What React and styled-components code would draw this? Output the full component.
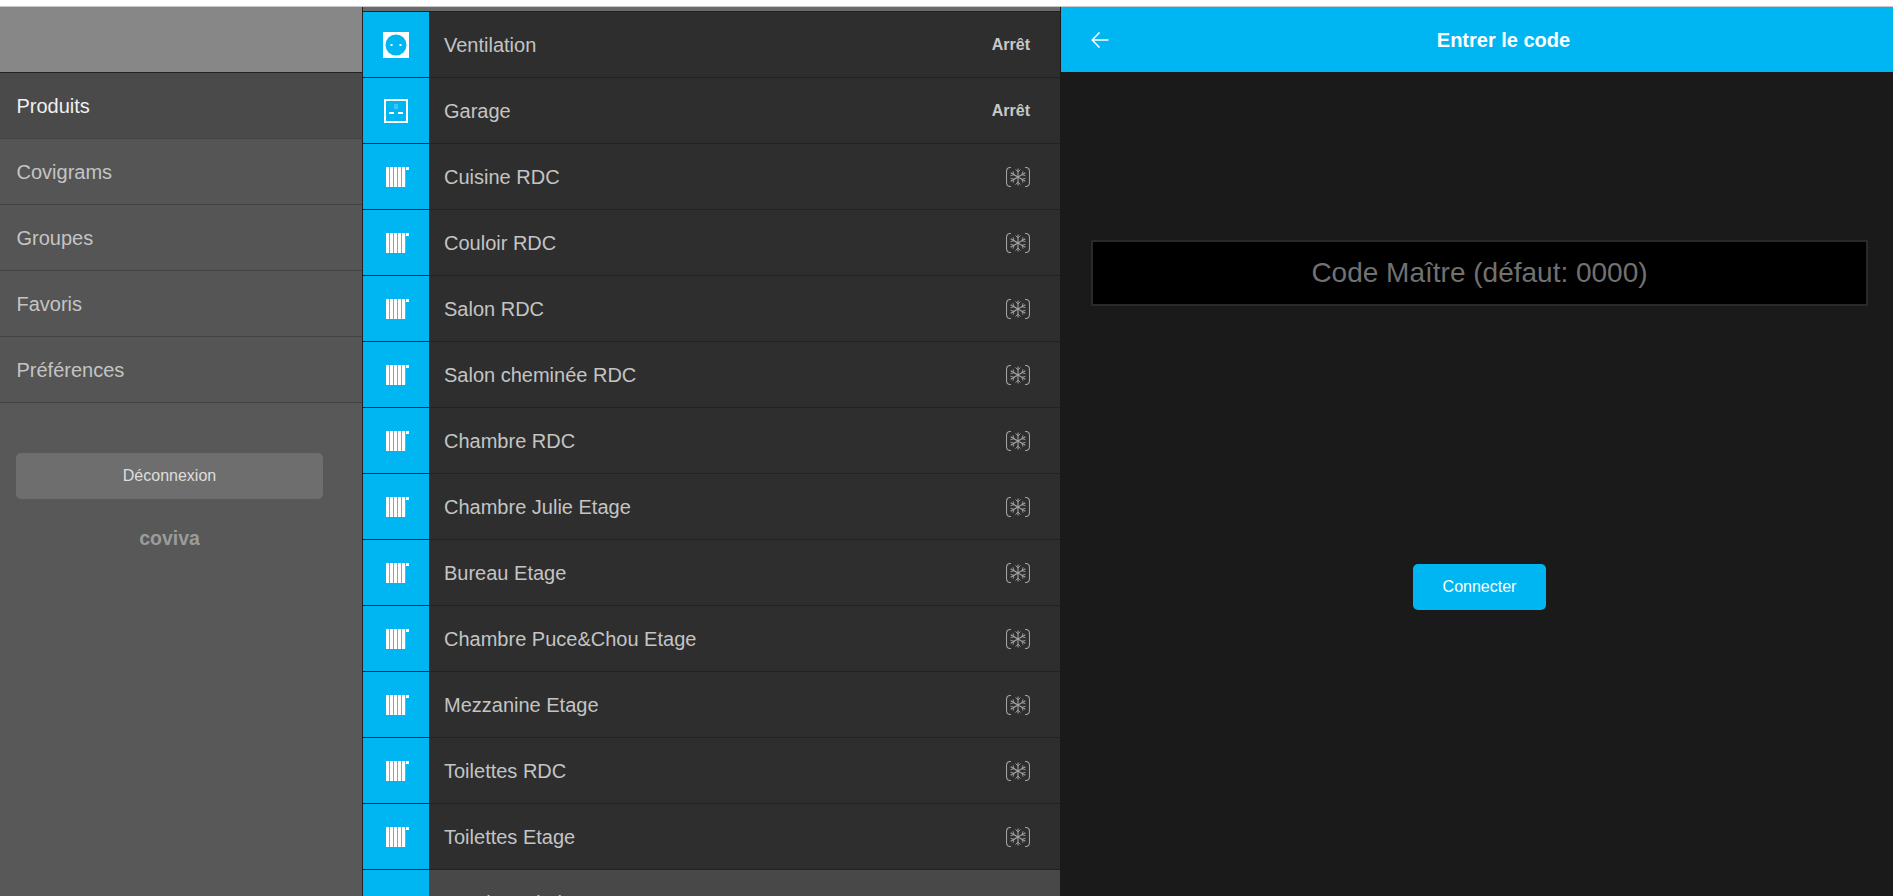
import React from 'react'
import styled, { createGlobalStyle } from 'styled-components'

const GlobalStyle = createGlobalStyle`
    html, body {
        margin: 0;
        padding: 0;
        background: #ffffff;
        height: 100%;
        overflow: hidden;
    }
    * {
        box-sizing: border-box;
    }
`

const Page = styled.div`
    height: 896px;
    padding-top: 6px;
    display: flex;
    flex-direction: column;
    font-family: 'Liberation Sans', Arial, sans-serif;
    overflow: hidden;
`

const Columns = styled.div`
    flex: 1;
    min-height: 0;
    display: flex;
    border-top: 1px solid #c8c8c8;
`

const Sidebar = styled.aside`
    width: 362px;
    flex-shrink: 0;
    background: #585858;
    display: flex;
    flex-direction: column;
`

const SidebarTop = styled.div`
    height: 66px;
    background: #878787;
    border-bottom: 1px solid #222222;
`

const MenuItem = styled.div`
    height: 66px;
    padding: 2px 0 0 16.5px;
    display: flex;
    align-items: center;
    font-size: 20px;
    color: ${(p) => (p.$active ? '#f0f0f0' : '#c4c4c4')};
    background: ${(p) => (p.$active ? '#4a4a4a' : '#555555')};
    border-bottom: 1px solid #424242;
`

const LogoutButton = styled.button`
    margin: 50px 0 0 16px;
    width: 307px;
    height: 46px;
    border: none;
    border-radius: 5px;
    background: #6e6e6e;
    color: #dedede;
    font-family: inherit;
    font-size: 16px;
    padding: 0;
`

const Brand = styled.div`
    margin: 28px 0 0 16px;
    width: 307px;
    text-align: center;
    font-size: 19.5px;
    font-weight: 700;
    color: #9b9b9b;
`

const ProductList = styled.div`
    width: 699px;
    flex-shrink: 0;
    background: #2e2e2e;
    border-left: 1px solid #222222;
    border-right: 1px solid #1a1a1a;
    overflow: hidden;
`

const ListTop = styled.div`
    height: 5px;
    background: #6a6a6a;
    border-bottom: 1px solid #222222;
`

const Row = styled.div`
    height: 66px;
    display: flex;
    align-items: center;
    background: ${(p) => (p.$muted ? '#484848' : '#2e2e2e')};
    border-bottom: 1px solid #222222;
`

const IconCell = styled.div`
    width: 66px;
    height: 100%;
    flex-shrink: 0;
    display: flex;
    align-items: center;
    justify-content: center;
    background: #00b6f2;
`

const RowName = styled.div`
    flex: 1;
    padding: 2px 0 0 15px;
    font-size: 20px;
    color: #c4c4c4;
`

const RowStatus = styled.div`
    width: 68px;
    margin-right: 30px;
    display: flex;
    justify-content: flex-end;
    align-items: center;
    font-size: 16px;
    font-weight: 700;
    color: #c8c8c8;
`

const RadiatorIcon = styled.svg`
    width: 23px;
    height: 20px;
    margin-left: 3px;
`

const Detail = styled.main`
    flex: 1;
    min-width: 0;
    background: #1a1a1a;
    display: flex;
    flex-direction: column;
`

const DetailHeader = styled.header`
    height: 65px;
    background: #00b6f2;
    display: flex;
    align-items: center;
    padding-left: 30px;
`

const BackIcon = styled.svg`
    width: 18px;
    height: 18px;
    flex-shrink: 0;
`

const DetailTitle = styled.h1`
    flex: 1;
    margin: 0;
    padding: 1px 0 0 5px;
    text-align: center;
    font-size: 20px;
    font-weight: 700;
    color: #ffffff;
`

const DetailBody = styled.div`
    padding: 168px 25px 0 30px;
    display: flex;
    flex-direction: column;
    align-items: center;
`

const CodeInput = styled.input`
    width: 100%;
    height: 66px;
    background: #000000;
    border: 2px solid #2a2a2a;
    outline: none;
    text-align: center;
    font-family: inherit;
    font-size: 28px;
    color: #ffffff;

    &::placeholder {
        color: #717171;
        opacity: 1;
    }
`

const ConnectButton = styled.button`
    margin-top: 258px;
    width: 133px;
    height: 46px;
    padding: 0;
    border: none;
    border-radius: 5px;
    background: #00b6f2;
    color: #ffffff;
    font-family: inherit;
    font-size: 16px;
`

const menu = ['Produits', 'Covigrams', 'Groupes', 'Favoris', 'Préférences']

const rooms = [
    'Cuisine RDC',
    'Couloir RDC',
    'Salon RDC',
    'Salon cheminée RDC',
    'Chambre RDC',
    'Chambre Julie Etage',
    'Bureau Etage',
    'Chambre Puce&Chou Etage',
    'Mezzanine Etage',
    'Toilettes RDC',
    'Toilettes Etage',
]

const SocketRound = () => (
    <svg width="26" height="26" viewBox="0 0 26 26">
        <rect width="26" height="26" fill="#ffffff" />
        <circle cx="13" cy="13" r="10.5" fill="#00b6f2" />
        <rect x="7.5" y="12" width="2" height="2" fill="#ffffff" />
        <rect x="16.5" y="12" width="2" height="2" fill="#ffffff" />
    </svg>
)

const SocketSquare = () => (
    <svg width="24" height="24" viewBox="0 0 24 24">
        <rect x="1" y="1" width="22" height="22" fill="none" stroke="#ffffff" strokeWidth="2" />
        <rect x="5" y="13" width="5" height="2" fill="#ffffff" />
        <rect x="14" y="13" width="5" height="2" fill="#ffffff" />
        <rect x="10.5" y="5.5" width="3" height="4" fill="#ffffff" fillOpacity="0.2" stroke="#ffffff" strokeOpacity="0.2" />
    </svg>
)

const Radiator = () => (
    <RadiatorIcon viewBox="0 0 23 20">
        {[0, 4, 8, 12, 16].map((x) => (
            <rect key={x} x={x} y="0" width="3.2" height="20" fill="#ffffff" />
        ))}
        <rect x="20" y="0" width="3" height="3" fill="#ffffff" />
    </RadiatorIcon>
)

const FrostIcon = () => (
    <svg width="24" height="20" viewBox="0 0 24 20" fill="none" stroke="#a2a2a2" strokeWidth="0.9">
        <path d="M5 0.5 H4 Q0.5 0.5 0.5 5 V15 Q0.5 19.5 4 19.5 H5" strokeWidth="1.1" />
        <path d="M19 0.5 H20 Q23.5 0.5 23.5 5 V15 Q23.5 19.5 20 19.5 H19" strokeWidth="1.1" />
        <path d="M12 1.5 V18.5 M4.6 5.8 L19.4 14.2 M19.4 5.8 L4.6 14.2" strokeWidth="1.1" />
        <path d="M9.5 2.5 L12 5 L14.5 2.5 M9.5 17.5 L12 15 L14.5 17.5" />
        <path d="M4.5 8.7 L8 7.7 L7 4.3 M19.5 8.7 L16 7.7 L17 4.3" />
        <path d="M4.5 11.3 L8 12.3 L7 15.7 M19.5 11.3 L16 12.3 L17 15.7" />
    </svg>
)

const App = () => (
    <Page>
        <GlobalStyle />
        <Columns>
            <Sidebar>
                <SidebarTop />
                {menu.map((item, i) => (
                    <MenuItem key={item} $active={i === 0}>
                        {item}
                    </MenuItem>
                ))}
                <LogoutButton>Déconnexion</LogoutButton>
                <Brand>coviva</Brand>
            </Sidebar>
            <ProductList>
                <ListTop />
                <Row>
                    <IconCell>
                        <SocketRound />
                    </IconCell>
                    <RowName>Ventilation</RowName>
                    <RowStatus>Arrêt</RowStatus>
                </Row>
                <Row>
                    <IconCell>
                        <SocketSquare />
                    </IconCell>
                    <RowName>Garage</RowName>
                    <RowStatus>Arrêt</RowStatus>
                </Row>
                {rooms.map((room) => (
                    <Row key={room}>
                        <IconCell>
                            <Radiator />
                        </IconCell>
                        <RowName>{room}</RowName>
                        <RowStatus>
                            <FrostIcon />
                        </RowStatus>
                    </Row>
                ))}
                <Row $muted>
                    <IconCell />
                    <RowName>Gestion admin</RowName>
                </Row>
            </ProductList>
            <Detail>
                <DetailHeader>
                    <BackIcon viewBox="0 0 18 18" fill="none" stroke="#ffffff" strokeWidth="1.5">
                        <path d="M17.5 9 H1.5 M8.5 1.5 L1.2 9 L8.5 16.5" />
                    </BackIcon>
                    <DetailTitle>Entrer le code</DetailTitle>
                </DetailHeader>
                <DetailBody>
                    <CodeInput placeholder="Code Maître (défaut: 0000)" />
                    <ConnectButton>Connecter</ConnectButton>
                </DetailBody>
            </Detail>
        </Columns>
    </Page>
)

export default App
